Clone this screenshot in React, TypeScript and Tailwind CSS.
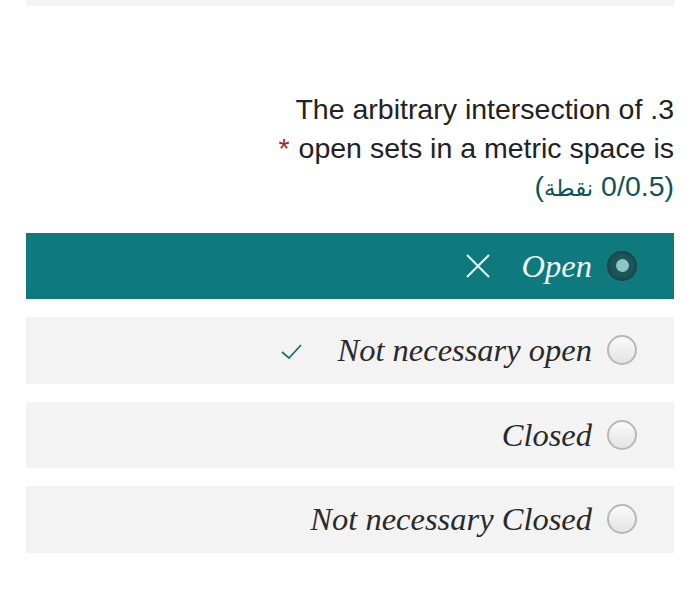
import React from "react";

function Radio({ selected }: { selected?: boolean }) {
  if (selected) {
    return (
      <div className="w-[30px] h-[30px] rounded-full bg-[#1d5658] flex items-center justify-center shrink-0 shadow-[inset_0_0_4px_rgba(0,0,0,0.45)]">
        <div className="w-[13px] h-[13px] rounded-full bg-[#8ec6c6]" />
      </div>
    );
  }
  return (
    <div className="w-[30px] h-[30px] rounded-full border-2 border-[#b8b8b8] bg-gradient-to-b from-[#fafafa] to-[#e4e4e4] shrink-0" />
  );
}

function Option({
  label,
  selected,
  mark,
}: {
  label: string;
  selected?: boolean;
  mark?: "x" | "check";
}) {
  return (
    <div
      className={
        "h-[66.5px] flex items-center justify-end pr-[37px] " +
        (selected ? "bg-[#0e7a7e]" : "bg-[#f3f3f3]")
      }
    >
      {mark === "x" && (
        <svg width="24" height="24" viewBox="0 0 24 24" className="mr-[32px]">
          <path d="M1 1 L23 23 M23 1 L1 23" stroke="#e8f4f4" strokeWidth="2" fill="none" />
        </svg>
      )}
      {mark === "check" && (
        <svg width="22" height="16" viewBox="0 0 22 16" className="mr-[34px] mt-[4px]">
          <path d="M1 8 L8 14 L20 1" stroke="#1f6f72" strokeWidth="1.8" fill="none" />
        </svg>
      )}
      <span
        className={
          "italic text-[32.5px] leading-none mr-[15px] " +
          (selected ? "text-[#f2f8f8]" : "text-[#2a2a2a]")
        }
        style={{ fontFamily: '"Liberation Serif", "Times New Roman", serif' }}
      >
        {label}
      </span>
      <Radio selected={selected} />
    </div>
  );
}

export default function App() {
  return (
    <div className="w-[700px] h-[603px] bg-white overflow-hidden">
      <div className="mx-[26px] h-[6px] bg-[#f3f3f3]" />
      <div
        className="mx-[26px] mt-[84px] text-right text-[28.5px] leading-[38.5px] text-[#222]"
        style={{ fontFamily: '"Liberation Sans", Arial, sans-serif' }}
      >
        <div>The arbitrary intersection of .3</div>
        <div>
          <span className="text-[#a8262a] mr-[9px]">*</span>open sets in a metric space is
        </div>
        <div className="text-[#0d5558]" dir="ltr">
          (<bdi
            dir="rtl"
            style={{ fontFamily: '"Noto Sans", "DejaVu Sans", sans-serif' }}
            className="text-[23px]"
          >
            نقطة
          </bdi>{" "}
          0/0.5)
        </div>
      </div>
      <div className="mx-[26px] mt-[26px] flex flex-col gap-[18px]">
        <Option label="Open" selected mark="x" />
        <Option label="Not necessary open" mark="check" />
        <Option label="Closed" />
        <Option label="Not necessary Closed" />
      </div>
    </div>
  );
}
